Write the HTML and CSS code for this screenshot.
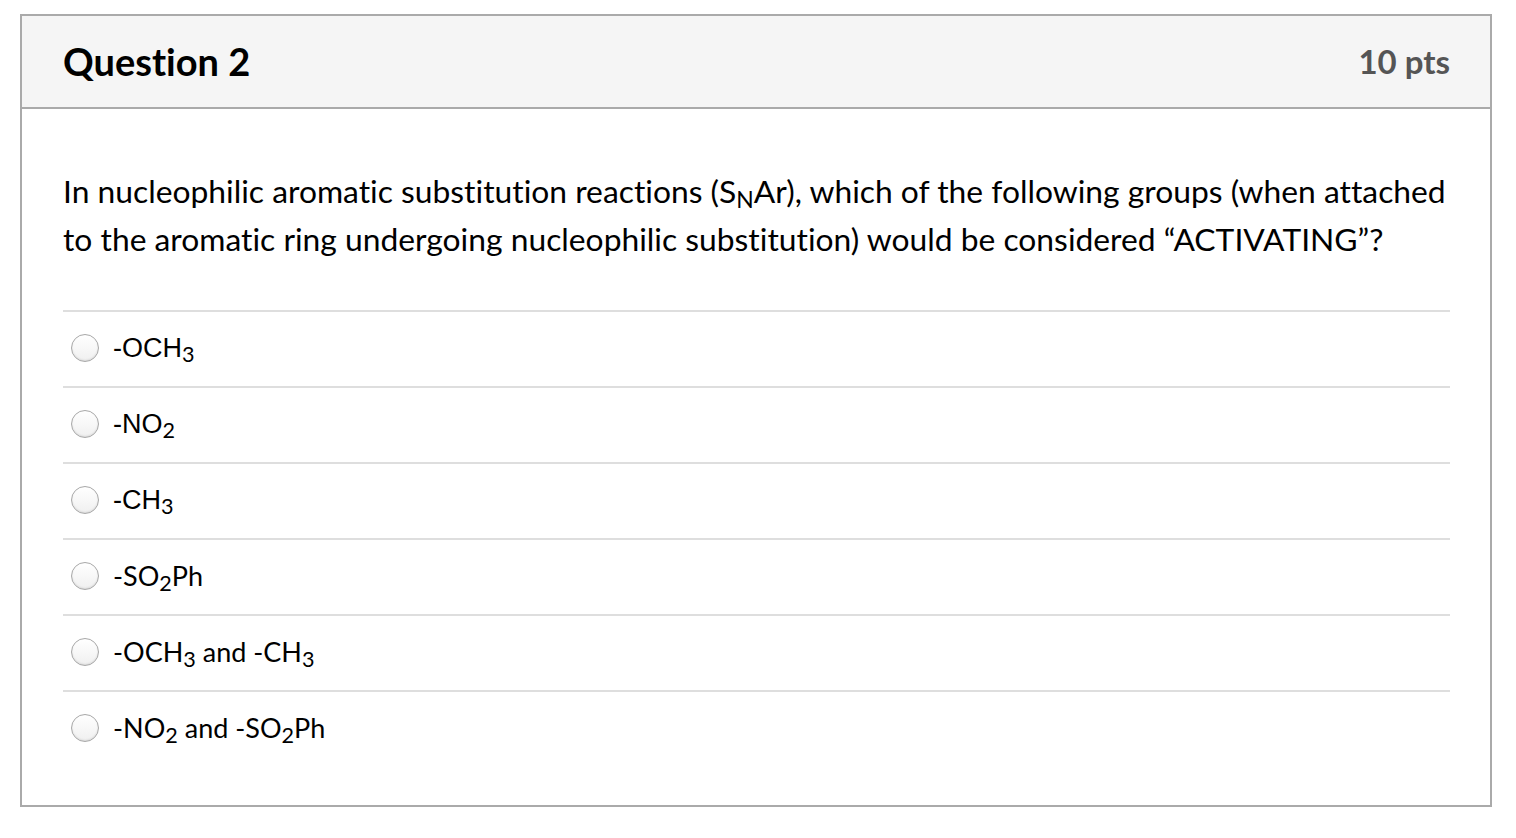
FILE: index.html
```html
<!DOCTYPE html>
<html>
<head>
<meta charset="utf-8">
<link rel="stylesheet" href="styles.css">
</head>
<body>
<div class="question">
  <div class="q-header">
    <div class="q-title">Question 2</div>
    <div class="q-pts">10 pts</div>
  </div>
  <div class="q-body">
    <p class="q-text">In nucleophilic aromatic substitution reactions (S<sub class="subn">N</sub>Ar), which of the following groups (when attached to the aromatic ring undergoing nucleophilic substitution) would be considered “ACTIVATING”?</p>
    <div class="answers">
      <div class="answer"><span class="radio"></span><span class="label arial">-OCH<sub>3</sub></span></div>
      <div class="answer"><span class="radio"></span><span class="label arial">-NO<sub>2</sub></span></div>
      <div class="answer"><span class="radio"></span><span class="label arial">-CH<sub>3</sub></span></div>
      <div class="answer"><span class="radio"></span><span class="label">-SO<sub>2</sub>Ph</span></div>
      <div class="answer"><span class="radio"></span><span class="label">-OCH<sub>3</sub> and -CH<sub>3</sub></span></div>
      <div class="answer"><span class="radio"></span><span class="label">-NO<sub>2</sub> and -SO<sub>2</sub>Ph</span></div>
    </div>
  </div>
</div>
</body>
</html>
```
FILE: styles.css
```css
html, body {
  margin: 0;
  padding: 0;
  background: #fff;
}
body {
  padding: 14px 0 0 20px;
  font-family: Lato, "Open Sans", sans-serif;
  font-variant-ligatures: none;
  color: #000;
}
.question {
  width: 1468px;
  border: 2px solid #aaaaaa;
}
.q-header {
  height: 91px;
  background: #f5f5f5;
  border-bottom: 2px solid #aaaaaa;
  display: flex;
  align-items: center;
  justify-content: space-between;
  padding: 0 40px 0 41px;
}
.q-title {
  font-weight: 700;
  font-size: 38px;
  color: #000;
  margin-top: -2px;
}
.q-pts {
  font-weight: 700;
  font-size: 33px;
  color: #555555;
  margin-top: -2px;
}
.q-body {
  padding: 58px 40px 39px 41px;
}
.q-text {
  margin: 0;
  font-size: 31.8px;
  line-height: 48px;
}
.subn {
  font-size: 0.72em;
  vertical-align: -0.2em;
  line-height: 0;
}
.answers {
  margin-top: 47px;
}
.answer {
  border-top: 2px solid #dedede;
  height: 74px;
  display: flex;
  align-items: center;
}
.radio {
  width: 26px;
  height: 26px;
  border-radius: 50%;
  border: 1px solid #a8a8a8;
  background: linear-gradient(#ffffff, #f0f0f0);
  box-shadow: inset 0 -1px 2px rgba(0,0,0,0.1);
  margin: -2px 14px 0 8px;
  flex: none;
}
.label {
  font-size: 27px;
  line-height: 30px;
  margin-top: -3px;
}
.label.arial {
  font-family: "Liberation Sans", Arial, sans-serif;
  font-size: 27px;
}
.label sub {
  font-family: Lato, sans-serif;
  font-size: 0.8em;
  vertical-align: -0.25em;
  line-height: 0;
}
```
